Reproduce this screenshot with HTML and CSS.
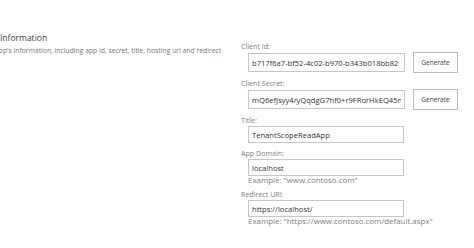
FILE: index.html
```html
<!DOCTYPE html>
<html lang="en">
<head>
    <meta charset="UTF-8">
    <meta name="viewport" content="width=device-width, initial-scale=1.0">
    <title>App Information</title>
    <link rel="stylesheet" href="styles.css">
</head>
<body>
    <div class="page">
        <div class="intro">
            <h2 class="intro-title">App Information</h2>
            <p class="intro-text">app's information, including app id, secret, title, hosting url and redirect</p>
        </div>

        <div class="form">
            <div class="field">
                <label class="field-label">Client Id:</label>
                <div class="row">
                    <input class="text-box" type="text" value="b717f6a7-bf52-4c02-b970-b343b018bb82">
                    <button class="gen-btn">Generate</button>
                </div>
            </div>
            <div class="field">
                <label class="field-label">Client Secret:</label>
                <div class="row">
                    <input class="text-box" type="text" value="mQ6efJsyy4/yQqdgG7hf0+r9FRorHkEQ45nQ=">
                    <button class="gen-btn">Generate</button>
                </div>
            </div>
            <div class="field">
                <label class="field-label">Title:</label>
                <div class="row">
                    <input class="text-box plain" type="text" value="TenantScopeReadApp">
                </div>
            </div>
            <div class="field">
                <label class="field-label">App Domain:</label>
                <div class="row">
                    <input class="text-box plain" type="text" value="localhost">
                </div>
                <div class="hint">Example: "www.contoso.com"</div>
            </div>
            <div class="field">
                <label class="field-label">Redirect URI:</label>
                <div class="row">
                    <input class="text-box plain" type="text" value="https://localhost/">
                </div>
                <div class="hint">Example: "https://www.contoso.com/default.aspx"</div>
            </div>
        </div>
    </div>
</body>
</html>
```

FILE: styles.css
```css
body {
    margin: 0;
    background: #fff;
    font-family: 'Open Sans', 'Noto Sans', sans-serif;
    color: #333;
    overflow: hidden;
}
.page {
    display: flex;
    padding-top: 28px;
}
.intro {
    width: 241px;
    flex-shrink: 0;
    overflow: hidden;
}
.intro-title {
    margin: 4px 0 0 -18px;
    font-size: 8.5px;
    font-weight: 400;
    line-height: 12px;
    color: #3c3c3c;
    white-space: nowrap;
}
.intro-text {
    margin: 2px 0 0 -5px;
    font-size: 6.8px;
    line-height: 10px;
    color: #777;
    white-space: nowrap;
}
.form {
    display: flex;
    flex-direction: column;
    padding-top: 13px;
}
.field {
    margin-bottom: 5px;
}
.field-label {
    display: block;
    font-size: 7.1px;
    line-height: 10px;
    color: #808080;
}
.row {
    display: flex;
    align-items: center;
    gap: 8px;
    margin-top: 1px;
    margin-left: 7px;
}
.text-box {
    box-sizing: border-box;
    width: 157px;
    height: 19px;
    padding: 0 3px;
    border: 1px solid #c6c6c6;
    font-family: inherit;
    font-size: 7.6px;
    color: #333;
    background: #fff;
    outline: none;
}
.text-box.plain {
    width: 156px;
    height: 17px;
}
.gen-btn {
    box-sizing: border-box;
    width: 45px;
    height: 21px;
    padding: 0;
    border: 1px solid #bdbdbd;
    background: #fdfdfd;
    font-family: inherit;
    font-size: 6.6px;
    color: #444;
}
.hint {
    margin-left: 7px;
    font-size: 7.9px;
    line-height: 8px;
    color: #808080;
}
```
